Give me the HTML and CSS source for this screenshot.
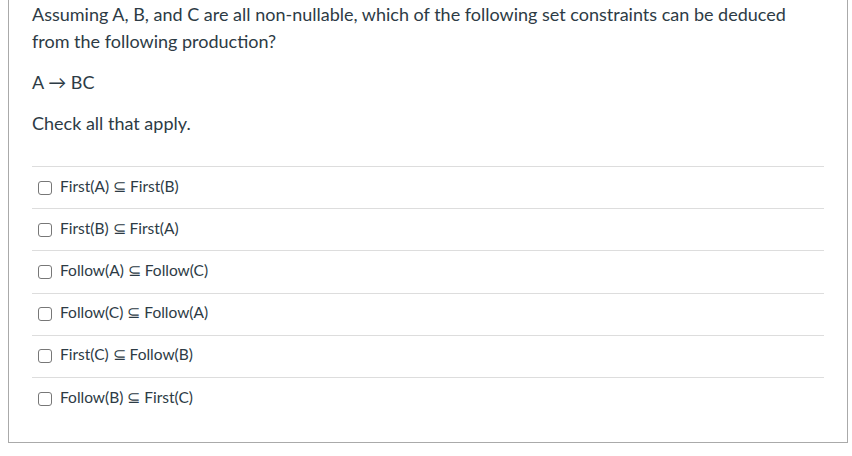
FILE: index.html
```html
<!DOCTYPE html>
<html lang="en">
<head>
<meta charset="utf-8">
<title>Question</title>
<link rel="stylesheet" href="styles.css">
</head>
<body>
<div class="question">
  <div class="text">
    <p>Assuming A, B, and C are all non-nullable, which of the following set constraints can be deduced from the following production?</p>
    <p>A → BC</p>
    <p>Check all that apply.</p>
  </div>
  <div class="answers">
    <label class="answer"><span class="box"></span><span class="label">First(A) ⊆ First(B)</span></label>
    <label class="answer"><span class="box"></span><span class="label">First(B) ⊆ First(A)</span></label>
    <label class="answer"><span class="box"></span><span class="label">Follow(A) ⊆ Follow(C)</span></label>
    <label class="answer"><span class="box"></span><span class="label">Follow(C) ⊆ Follow(A)</span></label>
    <label class="answer"><span class="box"></span><span class="label">First(C) ⊆ Follow(B)</span></label>
    <label class="answer"><span class="box"></span><span class="label">Follow(B) ⊆ First(C)</span></label>
  </div>
</div>
</body>
</html>
```
FILE: styles.css
```css
html, body {
  margin: 0;
  padding: 0;
  background: #fff;
}
body {
  font-family: Lato, "Liberation Sans", sans-serif;
  color: #2d3b45;
}
.question {
  margin-left: 8px;
  width: 840px;
  border: 1px solid #aaaaaa;
  border-top: none;
  padding: 1px 23px 23px 23px;
  box-sizing: border-box;
}
.text p {
  margin: 0 0 14px 0;
  font-size: 18px;
  line-height: 27px;
}
.text p:last-child {
  margin-bottom: 0;
}
.answers {
  margin-top: 29px;
}
.answer {
  display: flex;
  align-items: center;
  gap: 8px;
  height: 41.2px;
  box-sizing: content-box;
  border-top: 1px solid #dddddd;
  padding-left: 6px;
  font-size: 15.5px;
}
.box {
  width: 12px;
  height: 12px;
  border: 1px solid #777;
  border-radius: 3px;
  flex: none;
}
.label {
  position: relative;
  top: -2px;
  line-height: 20px;
}
```
